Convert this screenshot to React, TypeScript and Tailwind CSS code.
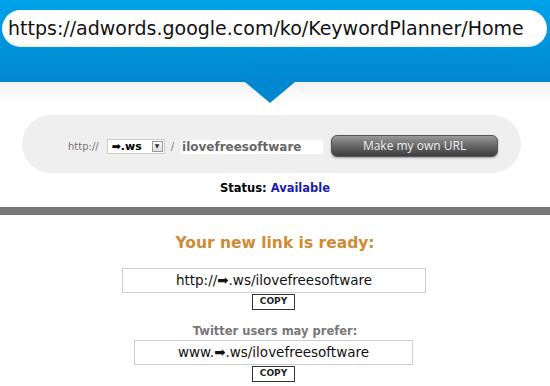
export default function App() {
  const verdana = { fontFamily: '"DejaVu Sans", Verdana, sans-serif' }
  return (
    <div className="w-[550px] h-[386px] bg-white overflow-hidden" style={verdana}>
      {/* header */}
      <div className="h-[82px] bg-gradient-to-b from-[#00a2ea] to-[#0087cf] pt-[10px] pl-[2px] pr-[3px]">
        <div className="h-[37px] rounded-full bg-white flex items-center pl-[6px] shadow-[inset_0_-2px_3px_rgba(0,0,0,0.08)]">
          <span className="text-[19px] text-[#111]">https://adwords.google.com/ko/KeywordPlanner/Home</span>
        </div>
      </div>
      <div className="h-[21px] bg-gradient-to-b from-[#f2f2f2] to-white">
        <div className="ml-[245px] w-0 h-0 border-l-[25px] border-r-[25px] border-t-[21px] border-l-transparent border-r-transparent border-t-[#0088d0]" />
      </div>

      {/* form pill */}
      <div className="mt-[12px] ml-[22px] w-[499px] h-[58px] rounded-full bg-[#efefef] flex items-center pl-[46px] pt-[4px]">
        <span className="text-[10px] text-[#777]">http://</span>
        <div className="ml-[8px] w-[58px] h-[15px] bg-white border border-[#ccc] flex items-center">
          <span className="pl-[4px] text-[11px] font-bold text-black flex-1 leading-none">➡.ws</span>
          <span className="w-[11px] h-[11px] mr-[1px] border border-[#999] bg-gradient-to-b from-white to-[#ddd] text-[6px] leading-none flex items-center justify-center text-[#333]">▼</span>
        </div>
        <span className="ml-[6px] text-[10px] text-[#777]">/</span>
        <div className="ml-[7px] w-[142px] h-[14px] bg-white flex items-center mt-[2px]">
          <span className="text-[12px] font-bold text-[#666] pl-[1px] leading-none" style={{ fontFamily: 'Tahoma, "DejaVu Sans", sans-serif' }}>ilovefreesoftware</span>
        </div>
        <button className="ml-[8px] w-[167px] h-[22px] rounded-[6px] bg-gradient-to-b from-[#9a9a9a] via-[#666] to-[#3e3e3e] text-[#eee] text-[12px] shadow-[0_1px_2px_rgba(0,0,0,0.35)] border border-[#555]" style={{ fontFamily: '"Open Sans", "DejaVu Sans", sans-serif' }}>
          Make my own URL
        </button>
      </div>

      {/* status */}
      <div className="mt-[8px] h-[14px] text-center text-[11.5px] font-bold leading-[14px]">
        <span className="text-black">Status: </span>
        <span className="text-[#1a1ab0]">Available</span>
      </div>

      <div className="mt-[12px] h-[8px] bg-[#777]" />

      {/* result */}
      <div className="mt-[19px] text-center text-[15.5px] font-bold text-[#cf8a34] leading-[18px]">Your new link is ready:</div>
      <div className="mt-[16px] ml-[122px] w-[304px] h-[25px] border border-[#ccc] flex items-center justify-center text-[13.5px] text-[#111]">
        http://➡.ws/ilovefreesoftware
      </div>
      <div className="mt-[1px] ml-[252px] w-[43px] h-[16px] border border-[#333] flex items-center justify-center text-[9px] font-bold text-[#222]">COPY</div>

      <div className="mt-[14px] text-center text-[11.5px] font-bold text-[#777] leading-[15px]">Twitter users may prefer:</div>
      <div className="mt-[1px] ml-[134px] w-[279px] h-[25px] border border-[#ccc] flex items-center justify-center text-[13.5px] text-[#111]">
        www.➡.ws/ilovefreesoftware
      </div>
      <div className="mt-[1px] ml-[252px] w-[43px] h-[16px] border border-[#333] flex items-center justify-center text-[9px] font-bold text-[#222]">COPY</div>
    </div>
  )
}
